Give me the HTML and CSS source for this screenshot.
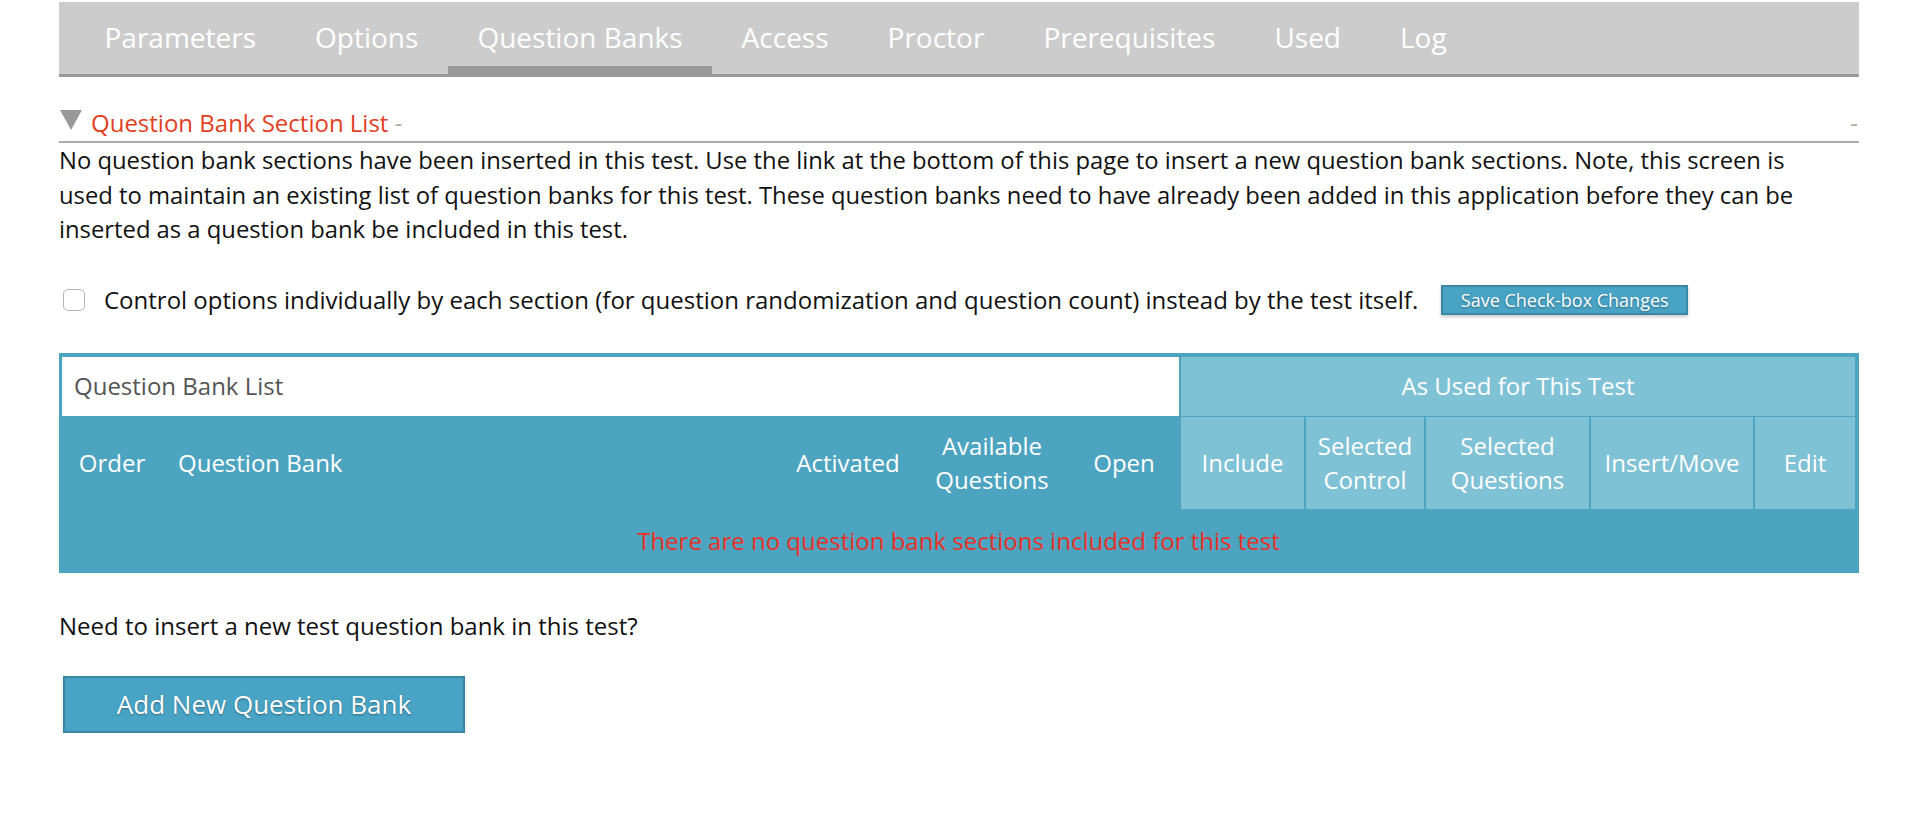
FILE: index.html
```html
<!DOCTYPE html>
<html lang="en">
<head>
<meta charset="utf-8">
<title>Question Banks</title>
<link rel="stylesheet" href="styles.css">
</head>
<body>
<div class="page">
  <nav class="tabs">
    <a class="tab">Parameters</a>
    <a class="tab">Options</a>
    <a class="tab active">Question Banks</a>
    <a class="tab">Access</a>
    <a class="tab">Proctor</a>
    <a class="tab">Prerequisites</a>
    <a class="tab">Used</a>
    <a class="tab">Log</a>
  </nav>

  <div class="section-head">
    <span class="tri"></span>
    <span class="section-title">Question Bank Section List</span>
    <span class="dash">-</span>
    <span class="dash right">-</span>
  </div>

  <p class="intro">No question bank sections have been inserted in this test. Use the link at the bottom of this page to insert a new question bank sections. Note, this screen is used to maintain an existing list of question banks for this test. These question banks need to have already been added in this application before they can be inserted as a question bank be included in this test.</p>

  <div class="control-row">
    <span class="checkbox"></span>
    <span class="control-text">Control options individually by each section (for question randomization and question count) instead by the test itself.</span>
    <button class="btn-small">Save Check-box Changes</button>
  </div>

  <div class="qtable">
    <div class="cell list-title">Question Bank List</div>
    <div class="cell used-title">As Used for This Test</div>

    <div class="cell dark c-order">Order</div>
    <div class="cell dark c-left">Question Bank</div>
    <div class="cell dark">Activated</div>
    <div class="cell dark">Available<br>Questions</div>
    <div class="cell dark">Open</div>
    <div class="cell light">Include</div>
    <div class="cell light">Selected<br>Control</div>
    <div class="cell light">Selected<br>Questions</div>
    <div class="cell light">Insert/Move</div>
    <div class="cell light">Edit</div>

    <div class="cell message">There are no question bank sections included for this test</div>
  </div>

  <p class="need">Need to insert a new test question bank in this test?</p>

  <button class="btn-big">Add New Question Bank</button>
</div>
</body>
</html>
```

FILE: styles.css
```css
* { box-sizing: border-box; }

html, body {
  margin: 0;
  padding: 0;
  background: #ffffff;
}

body {
  font-family: "Open Sans", "Liberation Sans", sans-serif;
  color: #111111;
}

.page {
  width: 1800px;
  margin: 0 auto;
  padding-top: 2px;
}

/* Tabs */
.tabs {
  display: flex;
  height: 75px;
  background: #cccccc;
  border-bottom: 3px solid #999999;
  padding-left: 16px;
}

.tab {
  display: flex;
  align-items: center;
  padding: 8px 29.5px 2px;
  font-size: 28px;
  color: #ffffff;
  border-bottom: 8px solid transparent;
}

.tab.active {
  border-bottom-color: #999999;
}

/* Section heading */
.section-head {
  display: flex;
  align-items: flex-end;
  height: 66px;
  padding-bottom: 2px;
  border-bottom: 2px solid #aaaaaa;
}

.tri {
  width: 0;
  height: 0;
  margin-left: 1px;
  margin-right: 9px;
  margin-bottom: 9px;
  border-left: 11px solid transparent;
  border-right: 11px solid transparent;
  border-top: 20px solid #999999;
}

.section-title {
  font-size: 24px;
  color: #e2401f;
}

.dash {
  font-size: 24px;
  color: #aaaaaa;
  margin-left: 6px;
}

.dash.right {
  margin-left: auto;
  margin-right: 1px;
}

.intro {
  margin: 0;
  padding-right: 40px;
  font-size: 23.8px;
  line-height: 34.5px;
}

/* Control row */
.control-row {
  display: flex;
  align-items: center;
  margin-top: 37px;
  height: 32px;
}

.checkbox {
  width: 22px;
  height: 22px;
  margin-left: 4px;
  border: 1px solid #b5b5b5;
  border-radius: 5px;
  background: #ffffff;
}

.control-text {
  font-size: 24px;
  margin-left: 19px;
}

.btn-small {
  margin-left: 23px;
  width: 247px;
  height: 30px;
  font-family: "Open Sans", sans-serif;
  font-size: 18px;
  color: #ffffff;
  background: #48a3c4;
  border: 2px solid #3a87a3;
  text-shadow: 0 1px 2px rgba(0,0,0,0.35);
  box-shadow: 0 2px 3px rgba(0,0,0,0.2);
  padding: 0;
  line-height: 24px;
}

/* Table */
.qtable {
  display: grid;
  grid-template-columns: 98px 1fr 134px 150px 110px 123px 118px 163px 162px 100px;
  grid-template-rows: 59px 92px 63px;
  column-gap: 2px;
  row-gap: 1px;
  margin-top: 37px;
  background: #4da4c0;
  padding: 4px 4px 0 3px;
}

.cell {
  display: flex;
  align-items: center;
  justify-content: center;
  text-align: center;
  font-size: 24px;
  line-height: 34px;
  color: #ffffff;
}

.list-title {
  grid-column: 1 / 6;
  background: #ffffff;
  color: #555555;
  justify-content: flex-start;
  padding-left: 12px;
}

.used-title {
  grid-column: 6 / 11;
  background: #7fc1d5;
}

.dark {
  background: #4da4c0;
}

.c-order {
  padding-left: 2px;
}

.c-left {
  justify-content: flex-start;
  padding-left: 16px;
}

.light {
  background: #7fc1d5;
}

.message {
  grid-column: 1 / 11;
  background: #4da4c0;
  color: #ea2f25;
  font-size: 24px;
}

.need {
  margin: 36px 0 0;
  font-size: 24px;
  line-height: 34px;
}

.btn-big {
  margin-top: 33px;
  margin-left: 4px;
  width: 402px;
  height: 57px;
  font-family: "Open Sans", sans-serif;
  font-size: 26px;
  color: #ffffff;
  background: #48a3c4;
  border: 2px solid #3a87a3;
  text-shadow: 0 1px 2px rgba(0,0,0,0.35);
  box-shadow: 0 2px 3px rgba(0,0,0,0.2);
  padding: 0;
}
```
